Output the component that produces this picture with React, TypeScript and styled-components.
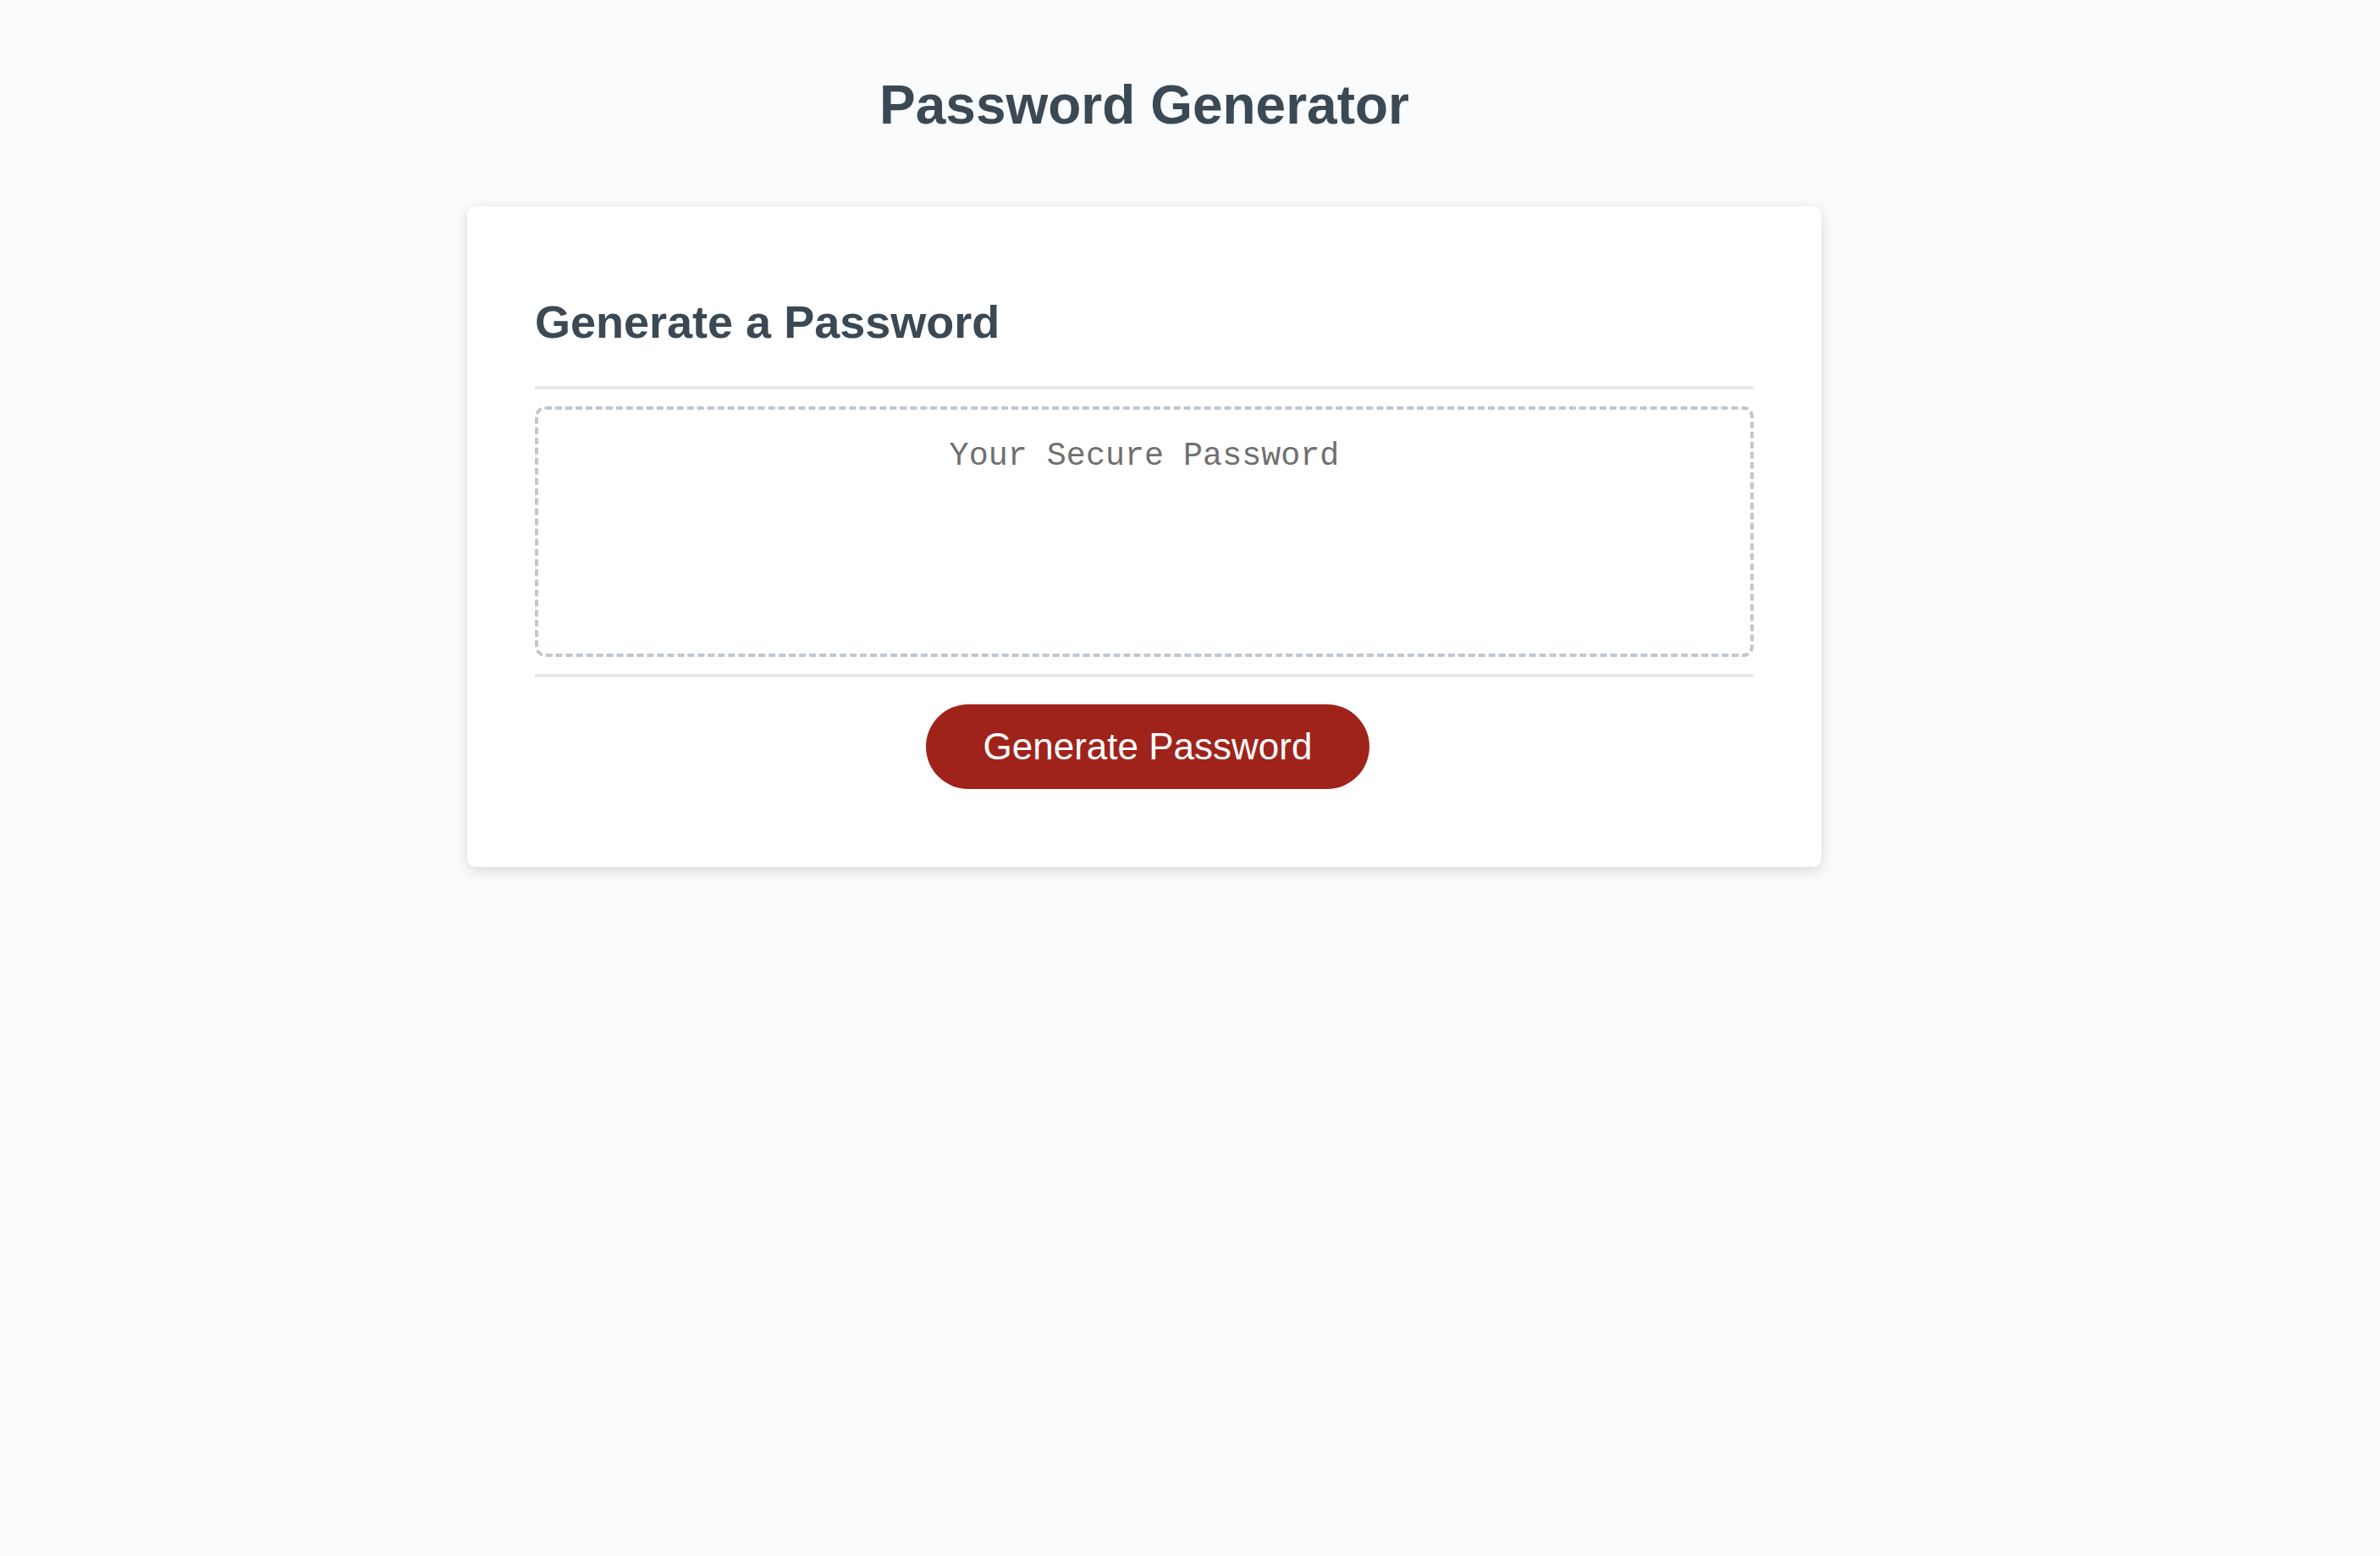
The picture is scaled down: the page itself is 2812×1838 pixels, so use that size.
import React from "react";
import styled, { createGlobalStyle } from "styled-components";

const GlobalStyle = createGlobalStyle`
  *, *::before, *::after { box-sizing: border-box; }
  html, body {
    margin: 0;
    padding: 0;
    min-height: 100%;
    background-color: #f9fbfd;
    font-family: "Liberation Sans", Arial, Helvetica, sans-serif;
  }
  body { min-height: 100vh; }
`;

const Wrapper = styled.div`
  min-height: 100vh;
  padding: 44px 148px 0 40px;
  background-color: #f9fbfd;
`;

const Header = styled.header`
  text-align: center;
  padding: 0 40px 40px;
  color: #3b4954;
`;

const Title = styled.h1`
  margin: 43px 0;
  font-size: 64px;
  line-height: 74px;
  font-weight: 700;
`;

const Card = styled.main`
  background-color: #ffffff;
  border-radius: 10px;
  box-shadow: rgba(0, 0, 0, 0.15) 0px 4px 16px 0px;
  color: #3b4954;
  font-size: 36px;
  margin: 0 auto;
  max-width: 1600px;
  padding: 60px 80px;
`;

const Divider = styled.div`
  width: 100%;
  height: 4px;
  background: #e7e9eb;
`;

const CardTitle = styled.h2`
  margin: 45px 0;
  font-size: 54px;
  line-height: 62px;
  font-weight: 700;
`;

const CardBody = styled.div`
  min-height: 200px;
`;

const PasswordBox = styled.textarea`
  appearance: none;
  display: block;
  width: 100%;
  padding: 33px 30px 167px;
  margin: 20px 0;
  font-family: "Liberation Mono", "Courier New", monospace;
  font-size: 38.4px;
  line-height: 44px;
  text-align: center;
  border: 4px dashed #c0c7cf;
  border-radius: 12px;
  resize: none;
  overflow: hidden;
  color: #3b4954;
  background: #ffffff;
  outline: none;

  &::placeholder {
    color: #6f6f6f;
  }
`;

const CardFooter = styled.div`
  text-align: center;
`;

const Button = styled.button`
  border: none;
  background-color: #a0231b;
  border-radius: 50px;
  color: #ffffff;
  display: inline-block;
  font-family: "Liberation Sans", Arial, Helvetica, sans-serif;
  font-size: 44px;
  line-height: 44px;
  margin: 32px 32px 32px 40px;
  padding: 28px 68px;
  text-align: center;
  cursor: pointer;
`;

export default function App() {
  return (
    <>
      <GlobalStyle />
      <Wrapper>
        <Header>
          <Title>Password Generator</Title>
        </Header>
        <Card>
          <CardTitle>Generate a Password</CardTitle>
          <Divider />
          <CardBody>
            <PasswordBox
              readOnly
              rows={2}
              placeholder="Your Secure Password"
              aria-label="Generated Password"
            />
          </CardBody>
          <Divider />
          <CardFooter>
            <Button type="button">Generate Password</Button>
          </CardFooter>
        </Card>
      </Wrapper>
    </>
  );
}
